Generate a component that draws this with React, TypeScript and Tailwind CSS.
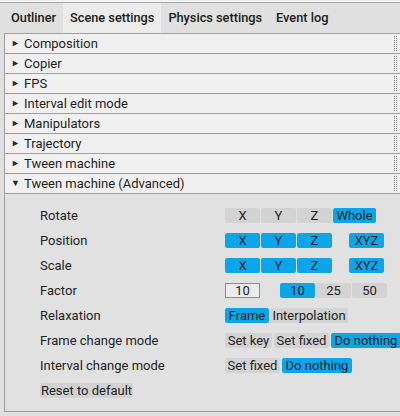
import React from 'react';

const sections = [
  'Composition',
  'Copier',
  'FPS',
  'Interval edit mode',
  'Manipulators',
  'Trajectory',
  'Tween machine',
];

function Grip() {
  const dots = [];
  for (let r = 0; r < 8; r++) {
    dots.push(<rect key={`a${r}`} x={0} y={r * 2} width={1} height={1} fill="#8a8a8a" />);
    dots.push(<rect key={`b${r}`} x={2} y={r * 2} width={1} height={1} fill="#8a8a8a" />);
  }
  return (
    <svg width="3" height="15" className="ml-auto mr-[4px]">
      {dots}
    </svg>
  );
}

function SectionHeader({ title, open }: { title: string; open?: boolean }) {
  return (
    <div className="flex h-[20px] items-center border-x border-t border-[#a0a0a0] bg-[#f0f0f0] pl-[6px]">
      <span className="w-[13px] text-[9px] leading-none text-[#2a2a2a]">{open ? '▼' : '►'}</span>
      <span className="text-[13px] leading-none text-[#1e1e1e]">{title}</span>
      <Grip />
    </div>
  );
}

function Btn({ label, on, w }: { label: string; on?: boolean; w: string }) {
  return (
    <div
      className={`flex h-[15px] shrink-0 items-center justify-center rounded-[2px] text-[13px] leading-none text-[#222] ${w} ${
        on ? 'bg-[#0ba5e9]' : 'bg-[#d3d3d3]'
      }`}
    >
      {label}
    </div>
  );
}

function Row({ label, children }: { label: string; children?: React.ReactNode }) {
  return (
    <div className="flex h-[25px] items-center">
      <div className="w-[185px] shrink-0 text-[13px] leading-none text-[#1e1e1e]">{label}</div>
      <div className="flex items-center">{children}</div>
    </div>
  );
}

export default function App() {
  return (
    <div
      className="flex h-[416px] w-[400px] flex-col overflow-hidden bg-[#e0e0e0]"
      style={{ fontFamily: 'Roboto, "Noto Sans", sans-serif' }}
    >
      <div className="h-[2px] bg-[#f4f4f4]" />
      <div className="h-px bg-[#a6a6a6]" />
      <div className="flex flex-1">
        <div className="flex w-[2px] flex-col">
          <div className="h-[9px] bg-[#e0e0e0]" />
          <div className="flex-1 bg-[#f6f6f6]" />
        </div>
        <div className="flex flex-1 flex-col">
          <div className="ml-[4px] flex h-[30px] items-stretch text-[12.75px] font-medium text-[#1a1a1a]">
            <div className="flex items-center px-[7px]">Outliner</div>
            <div className="flex items-center bg-[#ececec] px-[7px]">Scene settings</div>
            <div className="flex items-center px-[7px]">Physics settings</div>
            <div className="flex items-center px-[7px]">Event log</div>
          </div>
          <div className="ml-[4px] mr-px flex flex-col">
            {sections.map((s) => (
              <SectionHeader key={s} title={s} />
            ))}
            <SectionHeader title="Tween machine (Advanced)" open />
            <div className="flex flex-col border-x border-y border-[#a0a0a0] bg-[#e1e1e1] pb-[8px] pl-[35px] pt-[9px]">
              <Row label="Rotate">
                <div className="flex gap-px">
                  <Btn label="X" w="w-[35px]" />
                  <Btn label="Y" w="w-[35px]" />
                  <Btn label="Z" w="w-[35px]" />
                  <Btn label="Whole" w="w-[43px]" on />
                </div>
              </Row>
              <Row label="Position">
                <div className="flex gap-px">
                  <Btn label="X" w="w-[35px]" on />
                  <Btn label="Y" w="w-[35px]" on />
                  <Btn label="Z" w="w-[35px]" on />
                </div>
                <div className="ml-[17px]">
                  <Btn label="XYZ" w="w-[35px]" on />
                </div>
              </Row>
              <Row label="Scale">
                <div className="flex gap-px">
                  <Btn label="X" w="w-[35px]" on />
                  <Btn label="Y" w="w-[35px]" on />
                  <Btn label="Z" w="w-[35px]" on />
                </div>
                <div className="ml-[17px]">
                  <Btn label="XYZ" w="w-[35px]" on />
                </div>
              </Row>
              <Row label="Factor">
                <div className="flex h-[15px] w-[35px] items-center justify-center border border-[#8c8c8c] bg-[#ececec] text-[13px] leading-none text-[#222]">
                  10
                </div>
                <div className="ml-[20px] flex gap-px">
                  <Btn label="10" w="w-[35px]" on />
                  <Btn label="25" w="w-[35px]" />
                  <Btn label="50" w="w-[35px]" />
                </div>
              </Row>
              <Row label="Relaxation">
                <div className="flex gap-px">
                  <Btn label="Frame" w="w-[44px]" on />
                  <Btn label="Interpolation" w="w-[78px]" />
                </div>
              </Row>
              <Row label="Frame change mode">
                <div className="flex gap-[2px]">
                  <Btn label="Set key" w="w-[47px]" />
                  <Btn label="Set fixed" w="w-[55px]" />
                  <Btn label="Do nothing" w="w-[70px]" on />
                </div>
              </Row>
              <Row label="Interval change mode">
                <div className="flex gap-[2px]">
                  <Btn label="Set fixed" w="w-[55px]" />
                  <Btn label="Do nothing" w="w-[70px]" on />
                </div>
              </Row>
              <div className="flex h-[25px] items-center">
                <div className="flex h-[15px] w-[93px] items-center justify-center rounded-[2px] bg-[#d3d3d3] text-[13px] leading-none text-[#222]">
                  Reset to default
                </div>
              </div>
            </div>
          </div>
        </div>
      </div>
    </div>
  );
}
